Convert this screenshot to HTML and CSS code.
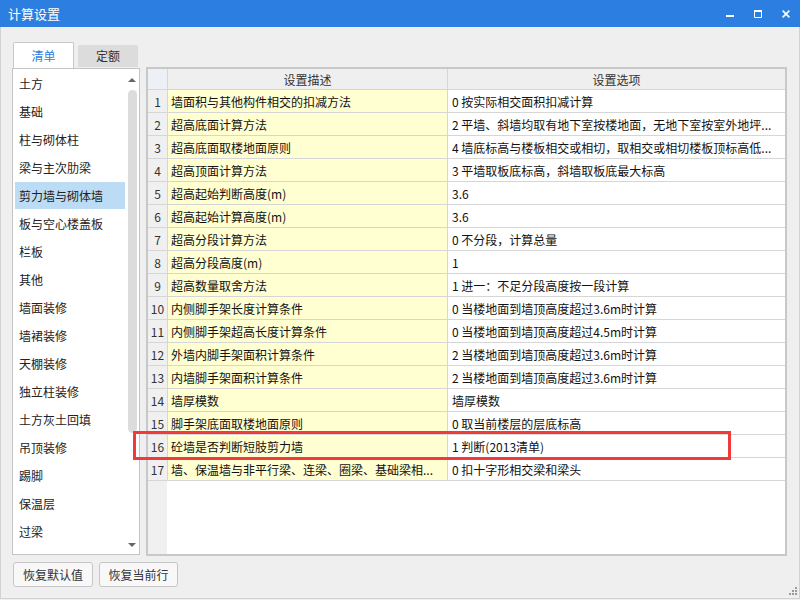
FILE: index.html
```html
<!DOCTYPE html>
<html>

<head>
    <meta charset="UTF-8">
    <meta name="viewport" content="width=device-width, initial-scale=1.0">
    <title>计算设置</title>
    <link rel="stylesheet" href="styles.css">
</head>

<body>
    <div class="window">
        <div class="titlebar">
            <span class="title">计算设置</span>
            <div class="controls">
                <svg width="8" height="8" viewBox="0 0 8 8"><rect x="0" y="5" width="8" height="2" fill="#fff"/></svg>
                <svg width="8" height="8" viewBox="0 0 8 8"><path d="M0.5 1h7v6.5h-7z" fill="none" stroke="#fff" stroke-width="1"/><rect x="0" y="0" width="8" height="2" fill="#fff"/></svg>
                <svg width="8" height="8" viewBox="0 0 8 8"><path d="M0.6 0.6L7.4 7.4M7.4 0.6L0.6 7.4" stroke="#fff" stroke-width="1.6"/></svg>
            </div>
        </div>

        <div class="content">
            <div class="tabs">
                <div class="tab active">清单</div>
                <div class="tab">定额</div>
            </div>

            <div class="main">
                <div class="category">
                    <ul class="cat-list">
                        <li>土方</li>
                        <li>基础</li>
                        <li>柱与砌体柱</li>
                        <li>梁与主次肋梁</li>
                        <li class="selected">剪力墙与砌体墙</li>
                        <li>板与空心楼盖板</li>
                        <li>栏板</li>
                        <li>其他</li>
                        <li>墙面装修</li>
                        <li>墙裙装修</li>
                        <li>天棚装修</li>
                        <li>独立柱装修</li>
                        <li>土方灰土回填</li>
                        <li>吊顶装修</li>
                        <li>踢脚</li>
                        <li>保温层</li>
                        <li>过梁</li>
                    </ul>
                    <div class="scrollbar">
                        <span class="arrow up"></span>
                        <span class="thumb"></span>
                        <span class="arrow down"></span>
                    </div>
                </div>

                <div class="grid">
                    <table>
                        <thead>
                            <tr>
                                <th class="num"></th>
                                <th class="desc">设置描述</th>
                                <th class="opt">设置选项</th>
                            </tr>
                        </thead>
                        <tbody>
                            <tr><td class="num">1</td><td class="desc">墙面积与其他构件相交的扣减方法</td><td class="opt">0 按实际相交面积扣减计算</td></tr>
                            <tr><td class="num">2</td><td class="desc">超高底面计算方法</td><td class="opt">2 平墙、斜墙均取有地下室按楼地面，无地下室按室外地坪...</td></tr>
                            <tr><td class="num">3</td><td class="desc">超高底面取楼地面原则</td><td class="opt">4 墙底标高与楼板相交或相切，取相交或相切楼板顶标高低...</td></tr>
                            <tr><td class="num">4</td><td class="desc">超高顶面计算方法</td><td class="opt">3 平墙取板底标高，斜墙取板底最大标高</td></tr>
                            <tr><td class="num">5</td><td class="desc">超高起始判断高度(m)</td><td class="opt">3.6</td></tr>
                            <tr><td class="num">6</td><td class="desc">超高起始计算高度(m)</td><td class="opt">3.6</td></tr>
                            <tr><td class="num">7</td><td class="desc">超高分段计算方法</td><td class="opt">0 不分段，计算总量</td></tr>
                            <tr><td class="num">8</td><td class="desc">超高分段高度(m)</td><td class="opt">1</td></tr>
                            <tr><td class="num">9</td><td class="desc">超高数量取舍方法</td><td class="opt">1 进一：不足分段高度按一段计算</td></tr>
                            <tr><td class="num">10</td><td class="desc">内侧脚手架长度计算条件</td><td class="opt">0 当楼地面到墙顶高度超过3.6m时计算</td></tr>
                            <tr><td class="num">11</td><td class="desc">内侧脚手架超高长度计算条件</td><td class="opt">0 当楼地面到墙顶高度超过4.5m时计算</td></tr>
                            <tr><td class="num">12</td><td class="desc">外墙内脚手架面积计算条件</td><td class="opt">2 当楼地面到墙顶高度超过3.6m时计算</td></tr>
                            <tr><td class="num">13</td><td class="desc">内墙脚手架面积计算条件</td><td class="opt">2 当楼地面到墙顶高度超过3.6m时计算</td></tr>
                            <tr><td class="num">14</td><td class="desc">墙厚模数</td><td class="opt">墙厚模数</td></tr>
                            <tr><td class="num">15</td><td class="desc">脚手架底面取楼地面原则</td><td class="opt">0 取当前楼层的层底标高</td></tr>
                            <tr><td class="num">16</td><td class="desc">砼墙是否判断短肢剪力墙</td><td class="opt">1 判断(2013清单)</td></tr>
                            <tr><td class="num">17</td><td class="desc">墙、保温墙与非平行梁、连梁、圈梁、基础梁相...</td><td class="opt">0 扣十字形相交梁和梁头</td></tr>
                        </tbody>
                    </table>
                </div>

                <!-- highlight round row 16 -->
                <div class="mark"></div>
            </div>

            <div class="actions">
                <button type="button" class="btn wide">恢复默认值</button>
                <button type="button" class="btn">恢复当前行</button>
            </div>
        </div>

        <svg class="grip" width="10" height="10" viewBox="0 0 10 10">
            <rect x="7" y="0" width="2" height="2" fill="#9a9a9a"/>
            <rect x="4" y="3" width="2" height="2" fill="#9a9a9a"/>
            <rect x="7" y="3" width="2" height="2" fill="#9a9a9a"/>
            <rect x="1" y="6" width="2" height="2" fill="#9a9a9a"/>
            <rect x="4" y="6" width="2" height="2" fill="#9a9a9a"/>
            <rect x="7" y="6" width="2" height="2" fill="#9a9a9a"/>
        </svg>
    </div>
</body>

</html>
```

FILE: styles.css
```css
* {
    box-sizing: border-box;
}

body {
    margin: 0;
    padding: 0;
    font-family: "Noto Sans CJK SC", "Microsoft YaHei", sans-serif;
    font-size: 12px;
    color: #222;
    background: #efefef;
}

.window {
    position: relative;
    width: 800px;
    height: 600px;
    background: #efefef;
}

/* title bar */
.titlebar {
    height: 27px;
    background: #2c7fe0;
    color: #fff;
    display: flex;
    align-items: center;
    justify-content: space-between;
    padding: 0 10px 0 8px;
}

.title {
    font-size: 13px;
}

.controls {
    display: flex;
    gap: 20px;
    padding-top: 1px;
}

.controls svg {
    display: block;
}

.content {
    height: 572px;
    padding: 15px 12px 0 11px;
    border: 1px solid #d2d2d2;
    border-top: none;
}

/* tabs */
.tabs {
    display: flex;
    align-items: flex-end;
    gap: 4px;
    height: 26px;
    padding-left: 1px;
}

.tab {
    width: 60px;
    height: 22px;
    line-height: 22px;
    text-align: center;
    background: #dcdcdc;
    color: #333;
    border-radius: 2px 2px 0 0;
    margin-bottom: 1px;
}

.tab.active {
    width: 61px;
    height: 26px;
    line-height: 25px;
    background: #fff;
    color: #2c7fe0;
    border: 1px solid #c8c8c8;
    border-bottom: none;
    margin-bottom: 0;
}

.main {
    position: relative;
    display: flex;
    gap: 6px;
    height: 488px;
}

/* left category list */
.category {
    width: 128px;
    height: 487px;
    background: #fff;
    border: 1px solid #c4c4c4;
    display: flex;
}

.cat-list {
    list-style: none;
    margin: 0;
    padding: 1px 0 0 2px;
    flex: 1;
}

.cat-list li {
    height: 27px;
    line-height: 27px;
    margin-bottom: 1px;
    padding-left: 4px;
    font-size: 12px;
    color: #222;
}

.cat-list li.selected {
    background: #bcdcf6;
}

.scrollbar {
    width: 14px;
    display: flex;
    flex-direction: column;
    align-items: center;
}

.arrow {
    width: 0;
    height: 0;
    border-left: 4px solid transparent;
    border-right: 4px solid transparent;
}

.arrow.up {
    margin-top: 9px;
    border-bottom: 4px solid #666;
}

.arrow.down {
    margin-top: auto;
    margin-bottom: 7px;
    border-top: 4px solid #666;
}

.thumb {
    margin-top: 8px;
    width: 9px;
    height: 343px;
    border-radius: 5px;
    background: #dcdcdc;
}

/* settings grid */
.grid {
    flex: 1;
    height: 489px;
    margin-top: -1px;
    border: 2px solid #c8c8c8;
    background: linear-gradient(to right, #f0f0f0 19px, #fff 19px);
    overflow: hidden;
}

table {
    width: 100%;
    table-layout: fixed;
    border-collapse: separate;
    border-spacing: 0;
}

th,
td {
    font-weight: normal;
    white-space: nowrap;
    overflow: hidden;
    border-right: 1px solid #d6d6d6;
    border-bottom: 1px solid #d6d6d6;
    padding: 0 3px;
}

th {
    height: 21px;
    background: #efefef;
    color: #333;
    text-align: center;
}

th.num {
    background: #edf0f5;
}

td {
    height: 23px;
    color: #111;
}

.num {
    width: 20px;
    padding: 0;
    text-align: center;
}

td.num {
    background: #f0f0f0;
    color: #333;
}

.desc {
    width: 280px;
}

td.desc {
    background: #ffffd2;
}

.opt {
    border-right: none;
}

td.opt {
    padding-left: 4px;
}

.mark {
    position: absolute;
    left: 121px;
    top: 363px;
    width: 598px;
    height: 29px;
    border: 3px solid #ef3b3b;
}

/* bottom buttons */
.actions {
    display: flex;
    gap: 6px;
    margin-top: 6px;
    padding-left: 1px;
}

.btn {
    width: 79px;
    height: 25px;
    font-family: inherit;
    font-size: 12px;
    color: #333;
    background: #f8f8f8;
    border: 1px solid #c6c6c6;
    border-radius: 3px;
    padding: 0;
}

.btn.wide {
    width: 80px;
}

.grip {
    position: absolute;
    right: 2px;
    bottom: 3px;
}
```
